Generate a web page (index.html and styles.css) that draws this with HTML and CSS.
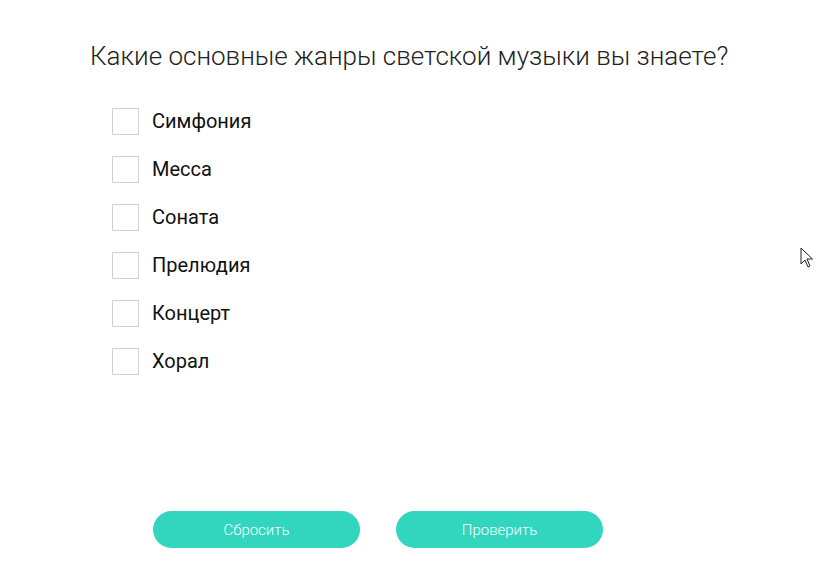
FILE: index.html
```html
<!DOCTYPE html>
<html lang="ru">
<head>
    <meta charset="UTF-8">
    <title>Тест</title>
    <link rel="stylesheet" href="styles.css">
</head>
<body>
    <div class="quiz">
        <h1 class="question">Какие основные жанры светской музыки вы знаете?</h1>
        <ul class="options">
            <li><span class="box"></span>Симфония</li>
            <li><span class="box"></span>Месса</li>
            <li><span class="box"></span>Соната</li>
            <li><span class="box"></span>Прелюдия</li>
            <li><span class="box"></span>Концерт</li>
            <li><span class="box"></span>Хорал</li>
        </ul>
        <div class="actions">
            <button class="btn">Сбросить</button>
            <button class="btn">Проверить</button>
        </div>
    </div>
    <svg class="cursor" width="14" height="22" viewBox="0 0 14 22">
        <path d="M1 1 L1 17 L5 13 L8 20 L10 19 L7 12 L12.5 12 Z" fill="#fff" stroke="#222" stroke-width="1"/>
    </svg>
</body>
</html>
```

FILE: styles.css
```css
body {
    margin: 0;
    background: #fff;
    font-family: Roboto, 'Liberation Sans', sans-serif;
    color: #111;
}
.quiz {
    width: 832px;
    height: 584px;
    position: relative;
}
.question {
    margin: 0;
    padding-top: 40px;
    padding-left: 90px;
    font-size: 26px;
    font-weight: 300;
    line-height: 32px;
    color: #222;
}
.options {
    list-style: none;
    margin: 25px 0 0;
    padding: 0 0 0 112px;
}
.options li {
    display: flex;
    align-items: center;
    height: 48px;
    font-size: 20px;
}
.box {
    width: 27px;
    height: 27px;
    border: 1px solid #d2d2d2;
    margin-right: 13px;
    box-sizing: border-box;
}
.actions {
    display: flex;
    gap: 36px;
    margin-top: 126px;
    padding-left: 153px;
}
.btn {
    width: 207px;
    height: 37px;
    border: none;
    border-radius: 19px;
    background: #32d5bd;
    color: #fff;
    font-family: Roboto, 'Liberation Sans', sans-serif;
    font-size: 15px;
    font-weight: 300;
    cursor: pointer;
}
.cursor {
    position: absolute;
    left: 800px;
    top: 247px;
}
```
